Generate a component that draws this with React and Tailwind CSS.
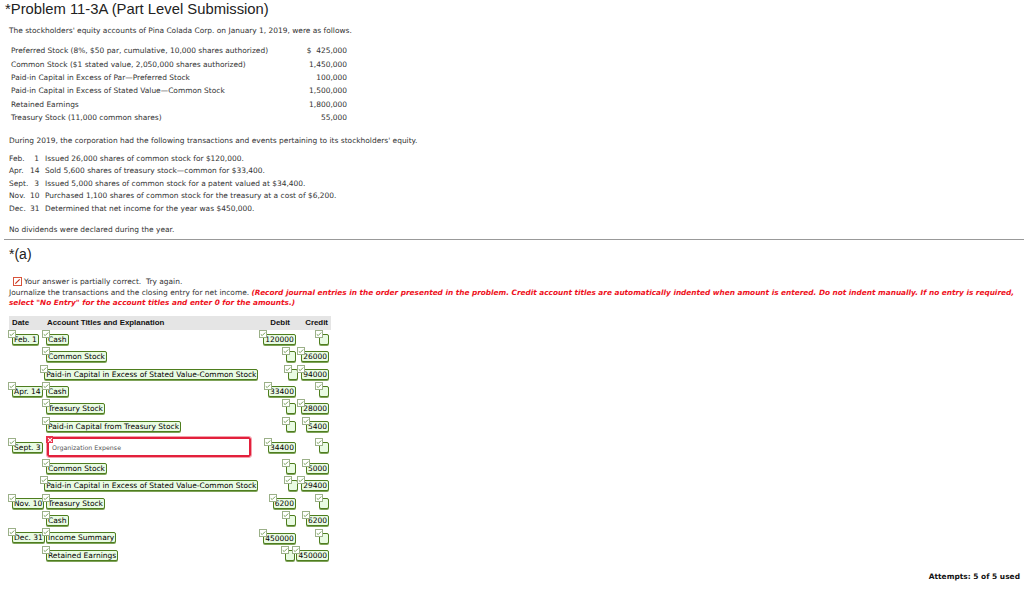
import React from 'react';

const equity = [
  ['Preferred Stock (8%, $50 par, cumulative, 10,000 shares authorized)', '$  425,000'],
  ['Common Stock ($1 stated value, 2,050,000 shares authorized)', '1,450,000'],
  ['Paid-in Capital in Excess of Par—Preferred Stock', '100,000'],
  ['Paid-in Capital in Excess of Stated Value—Common Stock', '1,500,000'],
  ['Retained Earnings', '1,800,000'],
  ['Treasury Stock (11,000 common shares)', '55,000'],
];

const events = [
  ['Feb.', '1', 'Issued 26,000 shares of common stock for $120,000.'],
  ['Apr.', '14', 'Sold 5,600 shares of treasury stock—common for $33,400.'],
  ['Sept.', '3', 'Issued 5,000 shares of common stock for a patent valued at $34,400.'],
  ['Nov.', '10', 'Purchased 1,100 shares of common stock for the treasury at a cost of $6,200.'],
  ['Dec.', '31', 'Determined that net income for the year was $450,000.'],
];

const entries = [
  { date: 'Feb. 1', account: 'Cash', debit: '120000', credit: '' },
  { date: '', account: 'Common Stock', debit: '', credit: '26000' },
  { date: '', account: 'Paid-in Capital in Excess of Stated Value-Common Stock', debit: '', credit: '94000' },
  { date: 'Apr. 14', account: 'Cash', debit: '33400', credit: '' },
  { date: '', account: 'Treasury Stock', debit: '', credit: '28000' },
  { date: '', account: 'Paid-in Capital from Treasury Stock', debit: '', credit: '5400' },
  { date: 'Sept. 3', account: 'Organization Expense', debit: '34400', credit: '', wrong: true },
  { date: '', account: 'Common Stock', debit: '', credit: '5000' },
  { date: '', account: 'Paid-in Capital in Excess of Stated Value-Common Stock', debit: '', credit: '29400' },
  { date: 'Nov. 10', account: 'Treasury Stock', debit: '6200', credit: '' },
  { date: '', account: 'Cash', debit: '', credit: '6200' },
  { date: 'Dec. 31', account: 'Income Summary', debit: '450000', credit: '' },
  { date: '', account: 'Retained Earnings', debit: '', credit: '450000' },
];

const CheckMark = () => (
  <span className="absolute -left-[5px] -top-[5px] flex h-[8px] w-[8px] items-center justify-center border border-[#9bb088] bg-white">
    <svg viewBox="0 0 8 8" className="h-[6px] w-[6px]">
      <path d="M1 4.5 L3 6 L7 2" fill="none" stroke="#5f8f3a" strokeWidth="1.1" />
    </svg>
  </span>
);

const CrossMark = () => (
  <span className="absolute -left-[3px] -top-[3px] flex h-[7px] w-[7px] items-center justify-center bg-[#e8304a]">
    <svg viewBox="0 0 8 8" className="h-[6px] w-[6px]">
      <path d="M1.5 1.5 L6.5 6.5 M6.5 1.5 L1.5 6.5" fill="none" stroke="#fff" strokeWidth="1.4" />
    </svg>
  </span>
);

// green answer field with its tick in the corner
const Field = ({ value, empty }) => (
  <span
    className={`relative inline-block h-[11px] rounded-[2px] border border-[#4e7d1e] bg-[#e9fbe3] text-[7.5px] leading-[9px] text-black shadow-[0_1px_0_#7fa35a] ${empty ? 'w-[10px]' : ''}`}
  >
    <CheckMark />
    <span className="block whitespace-nowrap px-[1px]">{value}</span>
  </span>
);

const Row = ({ entry }) => (
  <div className={`flex items-center ${entry.wrong ? 'h-[25px]' : 'h-[17.35px]'}`}>
    <div className="w-[38px] pl-[3px]">{entry.date && <Field value={entry.date} />}</div>
    <div className="w-[213px]">
      {entry.wrong ? (
        <span className="relative ml-[1px] flex h-[20px] w-[204px] items-center rounded-[2px] border-2 border-[#e3203c] pl-[3px] text-[6.3px] text-[#555] outline outline-1 outline-[#f4a0ac]">
          <CrossMark />
          {entry.account}
        </span>
      ) : (
        <Field value={entry.account} />
      )}
    </div>
    <div className="flex w-[45px] justify-end pr-[1px]">
      <Field value={entry.debit} empty={!entry.debit} />
    </div>
    <div className="flex w-[35px] justify-end pr-[2px]">
      <Field value={entry.credit} empty={!entry.credit} />
    </div>
  </div>
);

export default function App() {
  return (
    <div className="h-[589px] w-[1024px] overflow-hidden bg-white font-['DejaVu_Sans',sans-serif] text-[7.46px] text-[#333]">
      <h1 className="h-[19px] pl-[5px] font-['Liberation_Sans',sans-serif] text-[14.8px] leading-[19px] text-[#222]">
        *Problem 11-3A (Part Level Submission)
      </h1>
      <p className="mt-[6px] h-[11px] pl-[9px] leading-[11px]">
        The stockholders' equity accounts of Pina Colada Corp. on January 1, 2019, were as follows.
      </p>

      <div className="mt-[8px] ml-[11px] w-[336px]">
        {equity.map(([label, amount]) => (
          <div key={label} className="flex h-[13.4px] items-center justify-between">
            <span>{label}</span>
            <span className="whitespace-pre">{amount}</span>
          </div>
        ))}
      </div>

      <p className="mt-[10.6px] h-[11px] pl-[9px] leading-[11px]">
        During 2019, the corporation had the following transactions and events pertaining to its stockholders' equity.
      </p>

      <div className="mt-[6px] ml-[9px]">
        {events.map(([month, day, text]) => (
          <div key={month} className="flex h-[12.6px] items-center">
            <span className="w-[21px]">{month}</span>
            <span className="w-[9px] text-right">{day}</span>
            <span className="ml-[6px]">{text}</span>
          </div>
        ))}
      </div>

      <p className="mt-[9px] h-[11px] pl-[9px] leading-[11px]">No dividends were declared during the year.</p>
      <hr className="mt-[4px] ml-[4px] border-t border-[#999]" />

      <h2 className="mt-[5px] h-[19px] pl-[9px] font-['Liberation_Sans',sans-serif] text-[14px] leading-[19px] text-[#222]">
        *(a)
      </h2>

      <div className="mt-[12px] ml-[13px] flex h-[11px] items-center">
        <span className="flex h-[9px] w-[9px] items-center justify-center border border-[#d9533a]">
          <svg viewBox="0 0 8 8" className="h-[7px] w-[7px]">
            <path d="M1.5 6.5 L6.5 1.5" stroke="#c8321e" strokeWidth="1.3" />
          </svg>
        </span>
        <span className="ml-[2px]">Your answer is partially correct.&nbsp; Try again.</span>
      </div>

      <div className="mt-[1px] ml-[9px] mr-[4px] leading-[10px]">
        Journalize the transactions and the closing entry for net income.{' '}
        <b className="text-[7.34px] italic text-[#ee1122]">
          (Record journal entries in the order presented in the problem. Credit account titles are automatically indented when amount is entered. Do not indent manually. If no entry is required, select "No Entry" for the account titles and enter 0 for the amounts.)
        </b>
      </div>

      <div className="mt-[8px] ml-[9px] w-[322px]">
        <div className="flex h-[14px] items-center bg-[#e5e5e5] font-['Liberation_Sans',sans-serif] text-[7.9px] font-bold text-[#111]">
          <span className="w-[38px] pl-[3px]">Date</span>
          <span className="flex-1">Account Titles and Explanation</span>
          <span className="w-[45px] pr-[6px] text-right">Debit</span>
          <span className="w-[35px] pr-[3px] text-right">Credit</span>
        </div>
        <div className="pt-[1px]">
          {entries.map((entry, i) => (
            <Row key={i} entry={entry} />
          ))}
        </div>
      </div>

      <div className="mt-[7px] mr-[4px] text-right font-bold text-[#111]">Attempts: 5 of 5 used</div>
    </div>
  );
}
